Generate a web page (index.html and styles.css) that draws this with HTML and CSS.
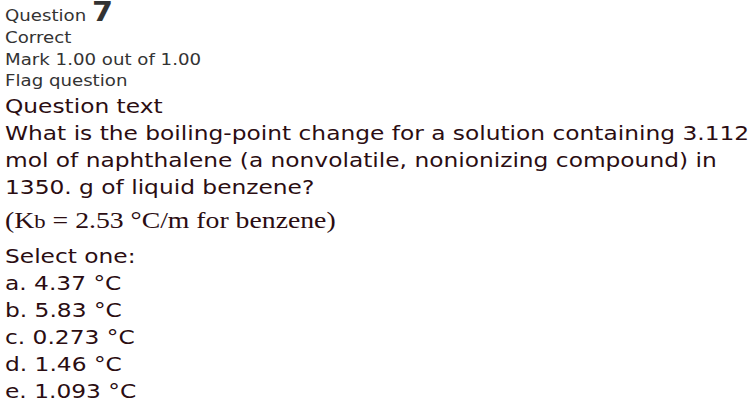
FILE: index.html
```html
<!DOCTYPE html>
<html>
<head>
<meta charset="utf-8">
<link rel="stylesheet" href="styles.css">
</head>
<body>
<div class="page">
  <div class="info">
    <div class="qno">Question <span class="num">7</span></div>
    <div class="line">Correct</div>
    <div class="line">Mark 1.00 out of 1.00</div>
    <div class="line">Flag question</div>
  </div>
  <div class="content">
    <div class="qt-label">Question text</div>
    <div class="qtext">What is the boiling-point change for a solution containing 3.112 mol of naphthalene (a nonvolatile, nonionizing compound) in 1350. g of liquid benzene?</div>
    <div class="kb">(K<span class="sub">b</span> = 2.53 °C/m for benzene)</div>
    <div class="answers">
      <div class="select">Select one:</div>
      <div class="opt">a. 4.37 °C</div>
      <div class="opt">b. 5.83 °C</div>
      <div class="opt">c. 0.273 °C</div>
      <div class="opt">d. 1.46 °C</div>
      <div class="opt">e. 1.093 °C</div>
    </div>
  </div>
</div>
</body>
</html>
```
FILE: styles.css
```css
html, body {
  margin: 0;
  padding: 0;
  background: #fff;
  overflow: hidden;
}
body {
  padding-left: 5px;
  font-family: "DejaVu Sans", sans-serif;
}
.page {
  width: 641px;
  transform: scaleX(1.165);
  transform-origin: 0 0;
}
.info {
  color: #333;
  font-size: 15.6px;
  line-height: 21.5px;
}
.qno {
  line-height: 23px;
  padding-top: 4px;
}
.num {
  font-size: 26px;
  font-weight: bold;
  line-height: 16px;
}
.content {
  color: #2b0d12;
  font-size: 20px;
  line-height: 27px;
}
.kb {
  font-family: "Liberation Serif", serif;
  font-size: 23.8px;
  line-height: 39.5px;
  margin-bottom: 2.5px;
}
.sub {
  font-size: 19.5px;
  line-height: 1;
}
.answers {
  line-height: 27px;
}
```
